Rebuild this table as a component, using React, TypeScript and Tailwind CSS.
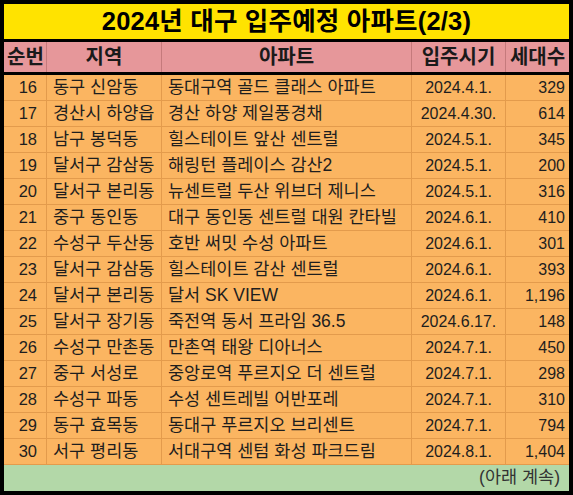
import React from "react";

const rows: [string, string, string, string, string][] = [
  ["16", "동구 신암동", "동대구역 골드 클래스 아파트", "2024.4.1.", "329"],
  ["17", "경산시 하양읍", "경산 하양 제일풍경채", "2024.4.30.", "614"],
  ["18", "남구 봉덕동", "힐스테이트 앞산 센트럴", "2024.5.1.", "345"],
  ["19", "달서구 감삼동", "해링턴 플레이스 감산2", "2024.5.1.", "200"],
  ["20", "달서구 본리동", "뉴센트럴 두산 위브더 제니스", "2024.5.1.", "316"],
  ["21", "중구 동인동", "대구 동인동 센트럴 대원 칸타빌", "2024.6.1.", "410"],
  ["22", "수성구 두산동", "호반 써밋 수성 아파트", "2024.6.1.", "301"],
  ["23", "달서구 감삼동", "힐스테이트 감산 센트럴", "2024.6.1.", "393"],
  ["24", "달서구 본리동", "달서 SK VIEW", "2024.6.1.", "1,196"],
  ["25", "달서구 장기동", "죽전역 동서 프라임 36.5", "2024.6.17.", "148"],
  ["26", "수성구 만촌동", "만촌역 태왕 디아너스", "2024.7.1.", "450"],
  ["27", "중구 서성로", "중앙로역 푸르지오 더 센트럴", "2024.7.1.", "298"],
  ["28", "수성구 파동", "수성 센트레빌 어반포레", "2024.7.1.", "310"],
  ["29", "동구 효목동", "동대구 푸르지오 브리센트", "2024.7.1.", "794"],
  ["30", "서구 평리동", "서대구역 센텀 화성 파크드림", "2024.8.1.", "1,404"],
];

const font = { fontFamily: '"Liberation Sans", "Noto Sans CJK KR", sans-serif' };

export default function App() {
  return (
    <div
      className="w-[573px] h-[495px] bg-black p-[4px] flex flex-col gap-[3px]"
      style={font}
    >
      <div className="h-[35px] bg-[#FFE300] flex items-center justify-center text-[25.5px] font-bold text-black leading-none tracking-[0.2px]">
        2024년 대구 입주예정 아파트(2/3)
      </div>
      <div className="flex flex-col">
        <div className="grid grid-cols-[43px_115px_250px_94px_63px] h-[30px] bg-[#E6979A] text-[20px] font-bold text-[#1a1a1a] leading-none">
          <div className="flex items-center pl-[3px] border-r border-[#C57A7C] whitespace-nowrap">순번</div>
          <div className="flex items-center justify-center border-r border-[#C57A7C]">지역</div>
          <div className="flex items-center justify-center border-r border-[#C57A7C]">아파트</div>
          <div className="flex items-center justify-center border-r border-[#C57A7C]">입주시기</div>
          <div className="flex items-center justify-center">세대수</div>
        </div>
        <div className="h-[3px] bg-black" />
        <div className="bg-[#FBB561] text-[16px] text-[#1e1e1e] leading-none">
          {rows.map((r) => (
            <div
              key={r[0]}
              className="grid grid-cols-[43px_115px_250px_94px_63px] h-[26px] border-b border-[#E39B4C]"
            >
              <div className="flex items-center justify-end pr-[9px] border-r border-[#E39B4C] text-[16.5px]">{r[0]}</div>
              <div className="flex items-center pl-[6px] border-r border-[#E39B4C] whitespace-nowrap text-[17.5px]">{r[1]}</div>
              <div className="flex items-center pl-[6px] border-r border-[#E39B4C] whitespace-nowrap text-[17.5px]">{r[2]}</div>
              <div className="flex items-center justify-center border-r border-[#E39B4C]">{r[3]}</div>
              <div className="flex items-center justify-end pr-[4px]">{r[4]}</div>
            </div>
          ))}
        </div>
        <div className="h-[26px] bg-[#B3D8A8] flex items-center justify-end pr-[9px] text-[17.5px] text-[#333] leading-none">
          (아래 계속)
        </div>
      </div>
    </div>
  );
}
